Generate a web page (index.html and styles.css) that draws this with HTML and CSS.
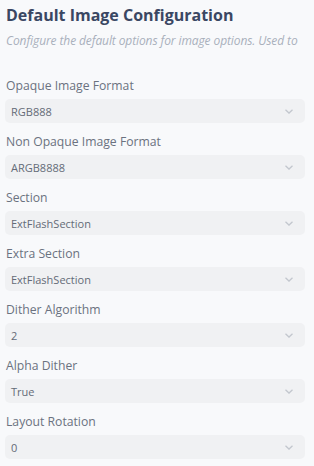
FILE: index.html
```html
<!DOCTYPE html>
<html lang="en">

<head>
    <meta charset="UTF-8">
    <meta name="viewport" content="width=device-width, initial-scale=1.0">
    <title>Default Image Configuration</title>
    <link rel="stylesheet" href="styles.css">
</head>

<body>
    <div class="panel">
        <h2 class="title">Default Image Configuration</h2>
        <p class="desc">Configure the default options for image options. Used to</p>

        <div class="fields">
            <div class="field">
                <label class="lbl">Opaque Image Format</label>
                <div class="sel"><span>RGB888</span><svg class="chev" viewBox="0 0 8 5"><polyline points="0.5,0.8 4,4 7.5,0.8"/></svg></div>
            </div>
            <div class="field">
                <label class="lbl">Non Opaque Image Format</label>
                <div class="sel"><span>ARGB8888</span><svg class="chev" viewBox="0 0 8 5"><polyline points="0.5,0.8 4,4 7.5,0.8"/></svg></div>
            </div>
            <div class="field">
                <label class="lbl">Section</label>
                <div class="sel"><span>ExtFlashSection</span><svg class="chev" viewBox="0 0 8 5"><polyline points="0.5,0.8 4,4 7.5,0.8"/></svg></div>
            </div>
            <div class="field">
                <label class="lbl">Extra Section</label>
                <div class="sel"><span>ExtFlashSection</span><svg class="chev" viewBox="0 0 8 5"><polyline points="0.5,0.8 4,4 7.5,0.8"/></svg></div>
            </div>
            <div class="field">
                <label class="lbl">Dither Algorithm</label>
                <div class="sel"><span>2</span><svg class="chev" viewBox="0 0 8 5"><polyline points="0.5,0.8 4,4 7.5,0.8"/></svg></div>
            </div>
            <div class="field">
                <label class="lbl">Alpha Dither</label>
                <div class="sel"><span>True</span><svg class="chev" viewBox="0 0 8 5"><polyline points="0.5,0.8 4,4 7.5,0.8"/></svg></div>
            </div>
            <div class="field">
                <label class="lbl">Layout Rotation</label>
                <div class="sel"><span>0</span><svg class="chev" viewBox="0 0 8 5"><polyline points="0.5,0.8 4,4 7.5,0.8"/></svg></div>
            </div>
        </div>
    </div>
</body>

</html>
```

FILE: styles.css
```css
* {
    padding: 0;
    margin: 0;
    box-sizing: border-box;
}

body {
    background: #f8f9fb;
    font-family: "Open Sans", "Noto Sans", sans-serif;
    overflow: hidden;
}

.panel {
    padding: 5px 9px 0 5px;
}

.title {
    font-size: 16px;
    line-height: 20px;
    font-weight: 700;
    color: #3a4763;
    padding-left: 1px;
}

.desc {
    margin-top: 8px;
    font-size: 12px;
    line-height: 16px;
    font-style: italic;
    color: #a9b0bc;
    white-space: nowrap;
    padding-left: 1px;
    letter-spacing: -0.1px;
}

.fields {
    margin-top: 29px;
    display: flex;
    flex-direction: column;
    gap: 11px;
}

.field {
    display: flex;
    flex-direction: column;
    gap: 5px;
}

.lbl {
    font-size: 12.2px;
    line-height: 16px;
    color: #6b7280;
    padding-left: 1px;
}

.sel {
    height: 24px;
    background: #f0f1f3;
    border-radius: 5px;
    display: flex;
    align-items: center;
    justify-content: space-between;
    padding: 0 12px 0 6px;
    font-size: 11px;
    color: #646b77;
}

.chev {
    width: 8px;
    height: 5px;
    fill: none;
    stroke: #c3c7ce;
    stroke-width: 1.3;
}
```
